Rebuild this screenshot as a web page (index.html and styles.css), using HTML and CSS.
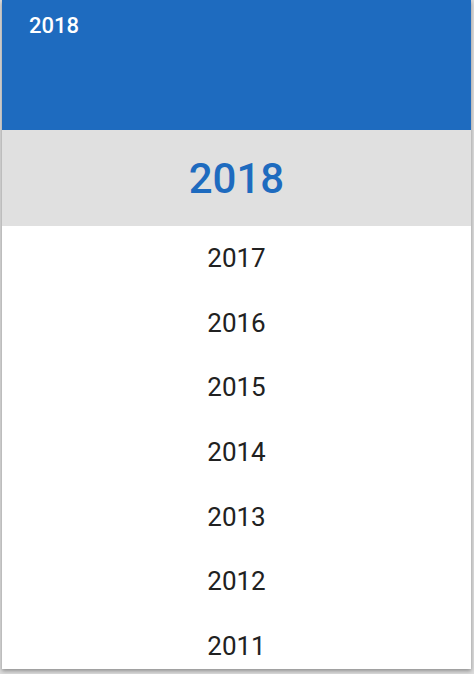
FILE: index.html
```html
<!DOCTYPE html>
<html>
<head>
<meta charset="utf-8">
<link rel="stylesheet" href="styles.css">
</head>
<body>
<div class="dialog">
  <div class="header"><span class="header-year">2018</span></div>
  <div class="list">
    <div class="year selected">2018</div>
    <div class="year">2017</div>
    <div class="year">2016</div>
    <div class="year">2015</div>
    <div class="year">2014</div>
    <div class="year">2013</div>
    <div class="year">2012</div>
    <div class="year">2011</div>
  </div>
</div>
</body>
</html>
```
FILE: styles.css
```css
html, body {
  margin: 0;
  padding: 0;
  width: 474px;
  height: 674px;
  overflow: hidden;
  background: #dcdcdc;
  font-family: Roboto, "Noto Sans", sans-serif;
}
.dialog {
  margin-left: 2px;
  width: 469px;
  height: 669px;
  background: #ffffff;
  overflow: hidden;
  box-shadow: 0 2px 4px rgba(0,0,0,0.35);
  display: flex;
  flex-direction: column;
}
.header {
  height: 130px;
  flex: none;
  background: #1e6bbf;
  box-sizing: border-box;
  padding: 12px 0 0 27px;
}
.header-year {
  color: #ffffff;
  font-size: 22px;
  font-weight: 500;
  line-height: 28px;
}
.list {
  display: flex;
  flex-direction: column;
}
.year {
  height: 64.6px;
  flex: none;
  display: flex;
  align-items: center;
  justify-content: center;
  font-size: 26px;
  color: #212121;
}
.year.selected {
  height: 96px;
  background: #e0e0e0;
  color: #1e6bbf;
  font-size: 42px;
  font-weight: 500;
}
```
